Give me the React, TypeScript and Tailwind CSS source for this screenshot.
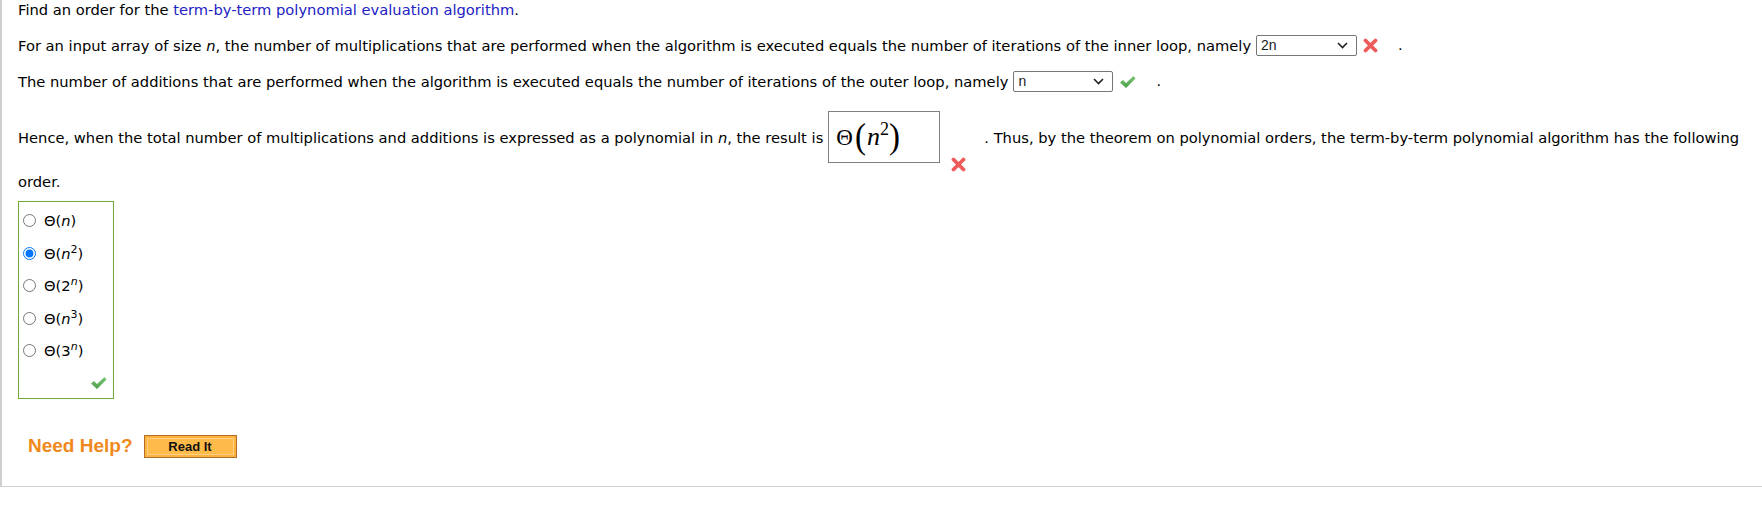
import React from 'react';

function Chevron() {
  return (
    <svg width="11" height="7" viewBox="0 0 11 7" className="shrink-0">
      <path d="M1 1 L5.5 5.5 L10 1" fill="none" stroke="#222" strokeWidth="1.6" />
    </svg>
  );
}

function Dropdown({ value, width }: { value: string; width: number }) {
  return (
    <div
      className="inline-flex items-center justify-between h-[21px] border border-[#767676] rounded-[2px] bg-white pl-[4px] pr-[8px] font-['Liberation_Sans',Arial,sans-serif] text-[14px] text-[#1a1a1a]"
      style={{ width }}
    >
      <span>{value}</span>
      <Chevron />
    </div>
  );
}

function WrongMark() {
  return (
    <svg width="15" height="15" viewBox="0 0 15 15" className="shrink-0">
      <path d="M2.5 2.5 L12.5 12.5 M12.5 2.5 L2.5 12.5" stroke="#ee5b5b" strokeWidth="3.8" strokeLinecap="round" />
    </svg>
  );
}

function RightMark() {
  return (
    <svg width="17" height="14" viewBox="0 0 17 14" className="shrink-0">
      <defs>
        <linearGradient id="gck" x1="0" y1="0" x2="0" y2="1">
          <stop offset="0" stopColor="#7cc576" />
          <stop offset="1" stopColor="#4a9f48" />
        </linearGradient>
      </defs>
      <path d="M1 7.5 L4 5 L7 8 L14.5 1 L16.5 3.5 L7 13 Z" fill="url(#gck)" />
    </svg>
  );
}

const choices = [
  { id: 'a', base: 'n', sup: '' },
  { id: 'b', base: 'n', sup: '2' },
  { id: 'c', base: '2', sup: 'n' },
  { id: 'd', base: 'n', sup: '3' },
  { id: 'e', base: '3', sup: 'n' },
];

function Choice({ base, sup }: { base: string; sup: string }) {
  return (
    <span>
      Θ(
      {base === 'n' ? <i>n</i> : base}
      {sup && (
        <sup className="text-[11px] top-[-6px]">{sup === 'n' ? <i>n</i> : sup}</sup>
      )}
      )
    </span>
  );
}

export default function App() {
  return (
    <div className="w-[1762px] h-[522px] bg-white font-['DejaVu_Sans',Verdana,sans-serif] text-[14.7px] text-black">
      <div className="h-[487px] border-l-2 border-b border-[#cfcfcf] pl-[16px] pt-[1px]">
        <div className="h-[18px] leading-[18px]">
          Find an order for the <span className="text-[#2222c4]">term-by-term polynomial evaluation algorithm</span>.
        </div>

        <div className="mt-[16px] h-[21px] flex items-center">
          <span className="leading-[18px]">
            For an input array of size <i>n</i>, the number of multiplications that are performed when the algorithm is executed equals the number of iterations of the inner loop, namely
          </span>
          <span className="ml-[5px] flex"><Dropdown value="2n" width={101} /></span>
          <span className="ml-[6px] flex"><WrongMark /></span>
          <span className="ml-[20px]">.</span>
        </div>

        <div className="mt-[15px] h-[21px] flex items-center">
          <span className="leading-[18px]">
            The number of additions that are performed when the algorithm is executed equals the number of iterations of the outer loop, namely
          </span>
          <span className="ml-[5px] flex"><Dropdown value="n" width={100} /></span>
          <span className="ml-[6px] flex"><RightMark /></span>
          <span className="ml-[20px]">.</span>
        </div>

        <div className="mt-[19px] flex items-start">
          <span className="mt-[18px] leading-[18px]">
            Hence, when the total number of multiplications and additions is expressed as a polynomial in <i>n</i>, the result is
          </span>
          <div className="ml-[5px] w-[112px] h-[52px] border border-[#808080] flex items-center pl-[7px] font-['Liberation_Serif','Times_New_Roman',serif] text-[23px] leading-none">
            <span>Θ</span>
            <span className="text-[33px] font-light scale-y-110 ml-[2px] relative top-[-1px]">(</span>
            <i className="ml-[1px] text-[26px]">n</i>
            <sup className="text-[18px] top-[-8px]">2</sup>
            <span className="text-[33px] font-light scale-y-110 relative top-[-1px]">)</span>
          </div>
          <span className="ml-[11px] mt-[46px] flex"><WrongMark /></span>
          <span className="ml-[18px] mt-[18px] leading-[18px]">
            . Thus, by the theorem on polynomial orders, the term-by-term polynomial algorithm has the following
          </span>
        </div>

        <div className="mt-[1px] h-[18px] leading-[18px]">order.</div>

        <div className="mt-[10px] w-[96px] h-[198px] border border-[#72a83c] flex flex-col pt-[10px] pl-[4px]">
          {choices.map((c) => (
            <label key={c.id} className="h-[32.5px] flex items-start gap-[8px]">
              <input type="radio" name="order" defaultChecked={c.id === 'b'} className="m-0 mt-[2px] w-[13px] h-[13px]" />
              <span className="leading-[18px]"><Choice base={c.base} sup={c.sup} /></span>
            </label>
          ))}
          <div className="flex justify-end pr-[6px] mt-[1px]">
            <RightMark />
          </div>
        </div>

        <div className="mt-[33px] flex items-center pl-[10px]">
          <span className="font-['Liberation_Sans',Arial,sans-serif] font-bold text-[19px] text-[#f0891c]">Need Help?</span>
          <button className="ml-[11px] w-[93px] h-[23px] border border-[#b0702a] bg-[#ffb13d] p-[2px]">
            <span className="flex items-center justify-center h-full border border-[#ffd08a] bg-[#ffbb4a] font-['Liberation_Sans',Arial,sans-serif] font-bold text-[13px] text-[#111]">
              Read It
            </span>
          </button>
        </div>
      </div>
    </div>
  );
}
